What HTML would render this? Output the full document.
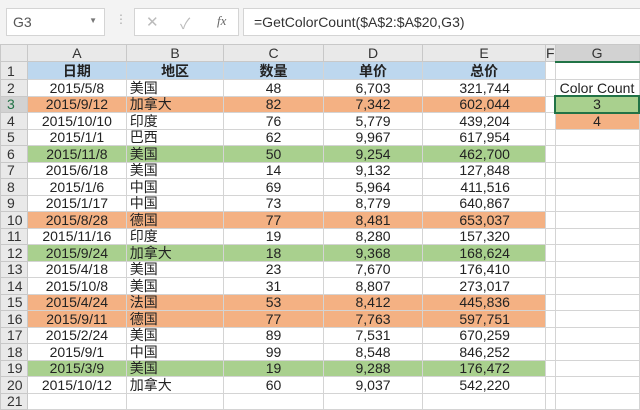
<!DOCTYPE html>
<html><head><meta charset="utf-8"><style>
*{margin:0;padding:0;box-sizing:border-box}
body{width:640px;height:401px;overflow:hidden;background:#fff;font-family:"Liberation Sans","Noto Sans CJK SC",sans-serif;position:relative}
.top{position:absolute;left:0;top:0;width:640px;height:44px;background:#f3f3f3}
.box{position:absolute;background:#fff;border:1px solid #d4d4d4}
table{position:absolute;left:0;top:44px;border-collapse:collapse;table-layout:fixed}
td{border:1px solid #d4d4d4;font-size:14px;color:#222;height:16.5px;padding:0 3px;white-space:nowrap;overflow:hidden;line-height:14px}
td.h{background:#e9e9e9;color:#333;text-align:center;border-color:#c8c8c8}
td.r{background:#e9e9e9;color:#333;text-align:left;padding-left:6px;border-color:#c8c8c8}
.c{text-align:center}.rt{text-align:right;padding-right:35px}
tr.o td:not(.r){background:#f4b183}
tr.g td:not(.r){background:#a9d08e}
tr.o td.f,tr.g td.f,tr.o td.gg,tr.g td.gg{background:#fff}
tr.b td:not(.r){background:#bdd7ee;font-weight:bold;text-align:center;height:18px}
tr.b td.f,tr.b td.gg{background:#fff}
</style></head><body>
<div class="top">
<div class="box" style="left:6px;top:8px;width:99px;height:28px"><span style="position:absolute;left:6px;top:5px;font-size:14px;color:#555">G3</span><span style="position:absolute;right:7px;top:7px;font-size:8px;color:#777">▼</span></div>
<span style="position:absolute;left:115px;top:12px;color:#aaa;font-size:12px">⋮</span>
<div class="box" style="left:134px;top:8px;width:105px;height:28px;color:#bbb;font-size:15px"><span style="position:absolute;left:11px;top:4px">✕</span><span style="position:absolute;left:45px;top:4px">✓</span><span style="position:absolute;left:82px;top:4px;font-style:italic;font-family:'Liberation Serif';color:#666;font-size:13px">fx</span></div>
<div class="box" style="left:243px;top:8px;width:400px;height:28px"><span style="position:absolute;left:10px;top:5px;font-size:14px;color:#333">=GetColorCount($A$2:$A$20,G3)</span></div>
</div>
<table>
<colgroup><col style="width:27px"><col style="width:99px"><col style="width:98px"><col style="width:100px"><col style="width:100px"><col style="width:123px"><col style="width:9px"><col style="width:84px"></colgroup>
<tr><td class="h" style="height:17px"></td><td class="h">A</td><td class="h">B</td><td class="h">C</td><td class="h">D</td><td class="h">E</td><td class="h" style="padding:0">F</td><td class="h" style="background:#d2d2d2;border-bottom:2px solid #217346">G</td></tr>
<tr class="b"><td class="r">1</td><td>日期</td><td>地区</td><td>数量</td><td>单价</td><td>总价</td><td class="f"></td><td class="gg"></td></tr>
<tr><td class="r">2</td><td class="c">2015/5/8</td><td>美国</td><td class="c">48</td><td class="c">6,703</td><td class="rt">321,744</td><td></td><td class="c" style="padding:0">Color Count</td></tr>
<tr class="o"><td class="r" style="background:#d2d2d2;color:#217346">3</td><td class="c">2015/9/12</td><td>加拿大</td><td class="c">82</td><td class="c">7,342</td><td class="rt">602,044</td><td class="f"></td><td class="c" style="background:#a9d08e;border:2px solid #217346">3</td></tr>
<tr><td class="r">4</td><td class="c">2015/10/10</td><td>印度</td><td class="c">76</td><td class="c">5,779</td><td class="rt">439,204</td><td></td><td class="c" style="background:#f4b183">4</td></tr>
<tr><td class="r">5</td><td class="c">2015/1/1</td><td>巴西</td><td class="c">62</td><td class="c">9,967</td><td class="rt">617,954</td><td></td><td></td></tr>
<tr class="g"><td class="r">6</td><td class="c">2015/11/8</td><td>美国</td><td class="c">50</td><td class="c">9,254</td><td class="rt">462,700</td><td class="f"></td><td class="gg"></td></tr>
<tr><td class="r">7</td><td class="c">2015/6/18</td><td>美国</td><td class="c">14</td><td class="c">9,132</td><td class="rt">127,848</td><td></td><td></td></tr>
<tr><td class="r">8</td><td class="c">2015/1/6</td><td>中国</td><td class="c">69</td><td class="c">5,964</td><td class="rt">411,516</td><td></td><td></td></tr>
<tr><td class="r">9</td><td class="c">2015/1/17</td><td>中国</td><td class="c">73</td><td class="c">8,779</td><td class="rt">640,867</td><td></td><td></td></tr>
<tr class="o"><td class="r">10</td><td class="c">2015/8/28</td><td>德国</td><td class="c">77</td><td class="c">8,481</td><td class="rt">653,037</td><td class="f"></td><td class="gg"></td></tr>
<tr><td class="r">11</td><td class="c">2015/11/16</td><td>印度</td><td class="c">19</td><td class="c">8,280</td><td class="rt">157,320</td><td></td><td></td></tr>
<tr class="g"><td class="r">12</td><td class="c">2015/9/24</td><td>加拿大</td><td class="c">18</td><td class="c">9,368</td><td class="rt">168,624</td><td class="f"></td><td class="gg"></td></tr>
<tr><td class="r">13</td><td class="c">2015/4/18</td><td>美国</td><td class="c">23</td><td class="c">7,670</td><td class="rt">176,410</td><td></td><td></td></tr>
<tr><td class="r">14</td><td class="c">2015/10/8</td><td>美国</td><td class="c">31</td><td class="c">8,807</td><td class="rt">273,017</td><td></td><td></td></tr>
<tr class="o"><td class="r">15</td><td class="c">2015/4/24</td><td>法国</td><td class="c">53</td><td class="c">8,412</td><td class="rt">445,836</td><td class="f"></td><td class="gg"></td></tr>
<tr class="o"><td class="r">16</td><td class="c">2015/9/11</td><td>德国</td><td class="c">77</td><td class="c">7,763</td><td class="rt">597,751</td><td class="f"></td><td class="gg"></td></tr>
<tr><td class="r">17</td><td class="c">2015/2/24</td><td>美国</td><td class="c">89</td><td class="c">7,531</td><td class="rt">670,259</td><td></td><td></td></tr>
<tr><td class="r">18</td><td class="c">2015/9/1</td><td>中国</td><td class="c">99</td><td class="c">8,548</td><td class="rt">846,252</td><td></td><td></td></tr>
<tr class="g"><td class="r">19</td><td class="c">2015/3/9</td><td>美国</td><td class="c">19</td><td class="c">9,288</td><td class="rt">176,472</td><td class="f"></td><td class="gg"></td></tr>
<tr><td class="r">20</td><td class="c">2015/10/12</td><td>加拿大</td><td class="c">60</td><td class="c">9,037</td><td class="rt">542,220</td><td></td><td></td></tr>
<tr><td class="r">21</td><td></td><td></td><td></td><td></td><td></td><td></td><td></td></tr>
</table>
</body></html>
